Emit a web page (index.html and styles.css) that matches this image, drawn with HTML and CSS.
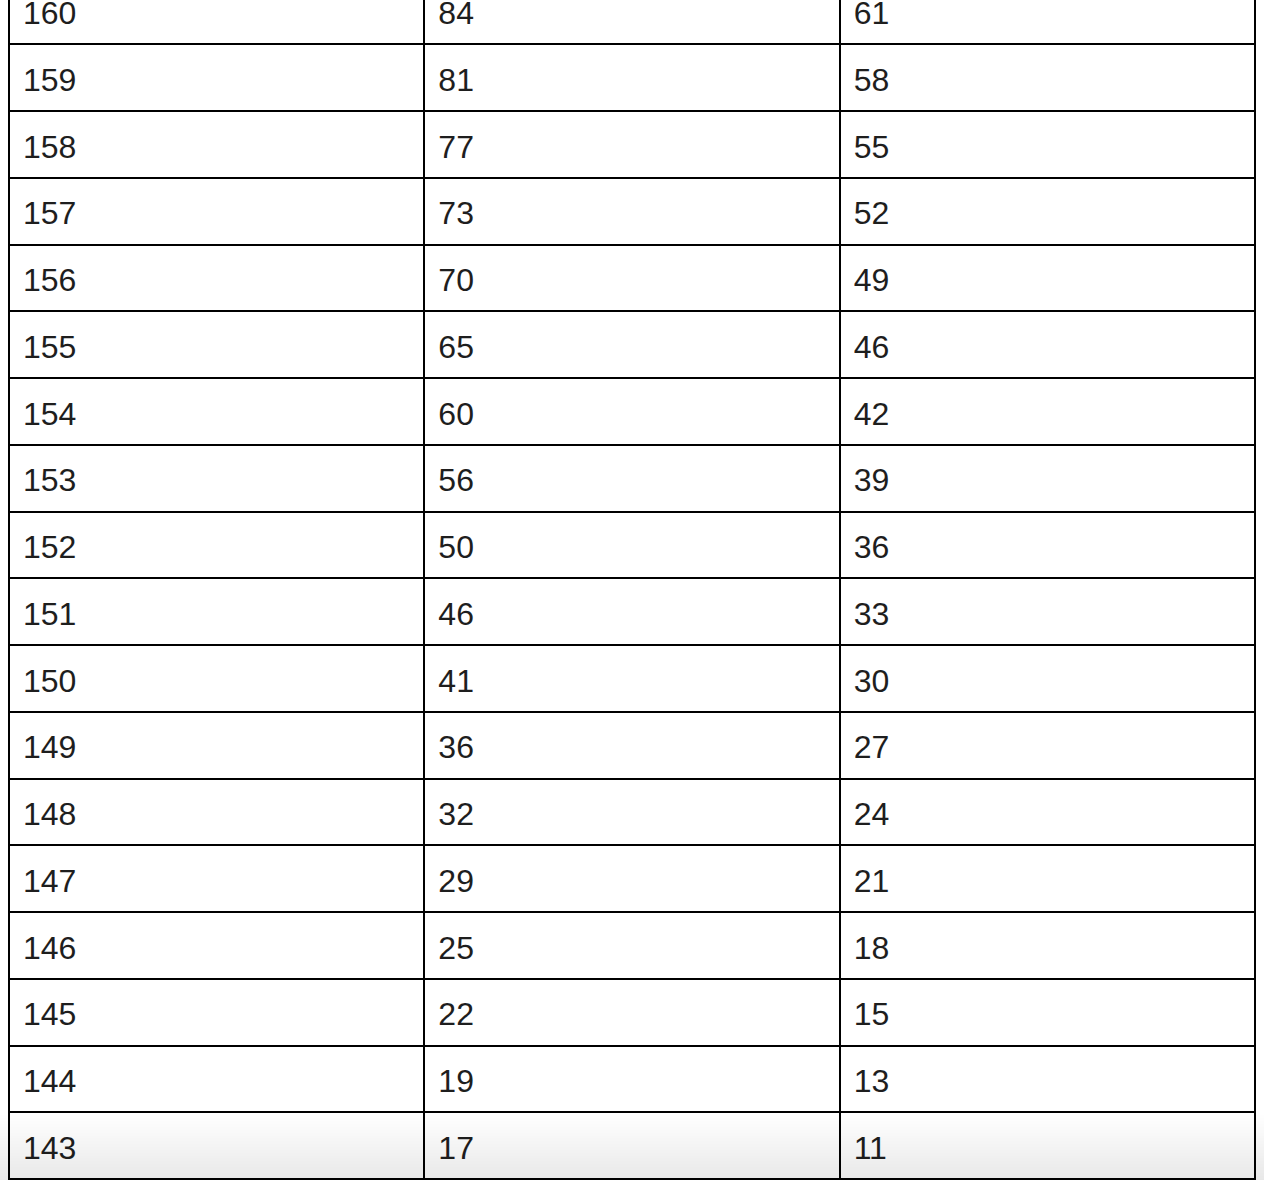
FILE: index.html
```html
<!DOCTYPE html>
<html>
<head>
<meta charset="utf-8">
<link rel="stylesheet" href="styles.css">
</head>
<body>
<table class="data-table">
<tbody>
<tr class="row-partial"><td>160</td><td>84</td><td>61</td></tr>
<tr><td>159</td><td>81</td><td>58</td></tr>
<tr><td>158</td><td>77</td><td>55</td></tr>
<tr><td>157</td><td>73</td><td>52</td></tr>
<tr><td>156</td><td>70</td><td>49</td></tr>
<tr><td>155</td><td>65</td><td>46</td></tr>
<tr><td>154</td><td>60</td><td>42</td></tr>
<tr><td>153</td><td>56</td><td>39</td></tr>
<tr><td>152</td><td>50</td><td>36</td></tr>
<tr><td>151</td><td>46</td><td>33</td></tr>
<tr><td>150</td><td>41</td><td>30</td></tr>
<tr><td>149</td><td>36</td><td>27</td></tr>
<tr><td>148</td><td>32</td><td>24</td></tr>
<tr><td>147</td><td>29</td><td>21</td></tr>
<tr><td>146</td><td>25</td><td>18</td></tr>
<tr><td>145</td><td>22</td><td>15</td></tr>
<tr><td>144</td><td>19</td><td>13</td></tr>
<tr><td>143</td><td>17</td><td>11</td></tr>
</tbody>
</table>
<div class="fade"></div>
</body>
</html>
```
FILE: styles.css
```css
html, body {
  background: #ffffff;
}
body {
  margin: 0 8px 8px 8px;
  font-family: "Liberation Sans", Arial, sans-serif;
  color: #1e1e1e;
}
.data-table {
  width: 100%;
  table-layout: fixed;
  border-collapse: separate;
  border-spacing: 0;
  border-left: 2px solid #000;
}
.data-table td {
  border-right: 2px solid #000;
  border-bottom: 2px solid #000;
  padding: 17.5px 13px 12.5px 13px;
  font-size: 32px;
  line-height: 34.75px;
  text-align: left;
  vertical-align: top;
}
.data-table .row-partial td {
  padding: 0 13px 17.3px 13px;
  line-height: 26px;
}
.fade {
  position: fixed;
  left: 0;
  right: 0;
  bottom: 0;
  height: 66px;
  background: linear-gradient(to bottom, rgba(0,0,0,0.0), rgba(0,0,0,0.09));
  pointer-events: none;
}
```
